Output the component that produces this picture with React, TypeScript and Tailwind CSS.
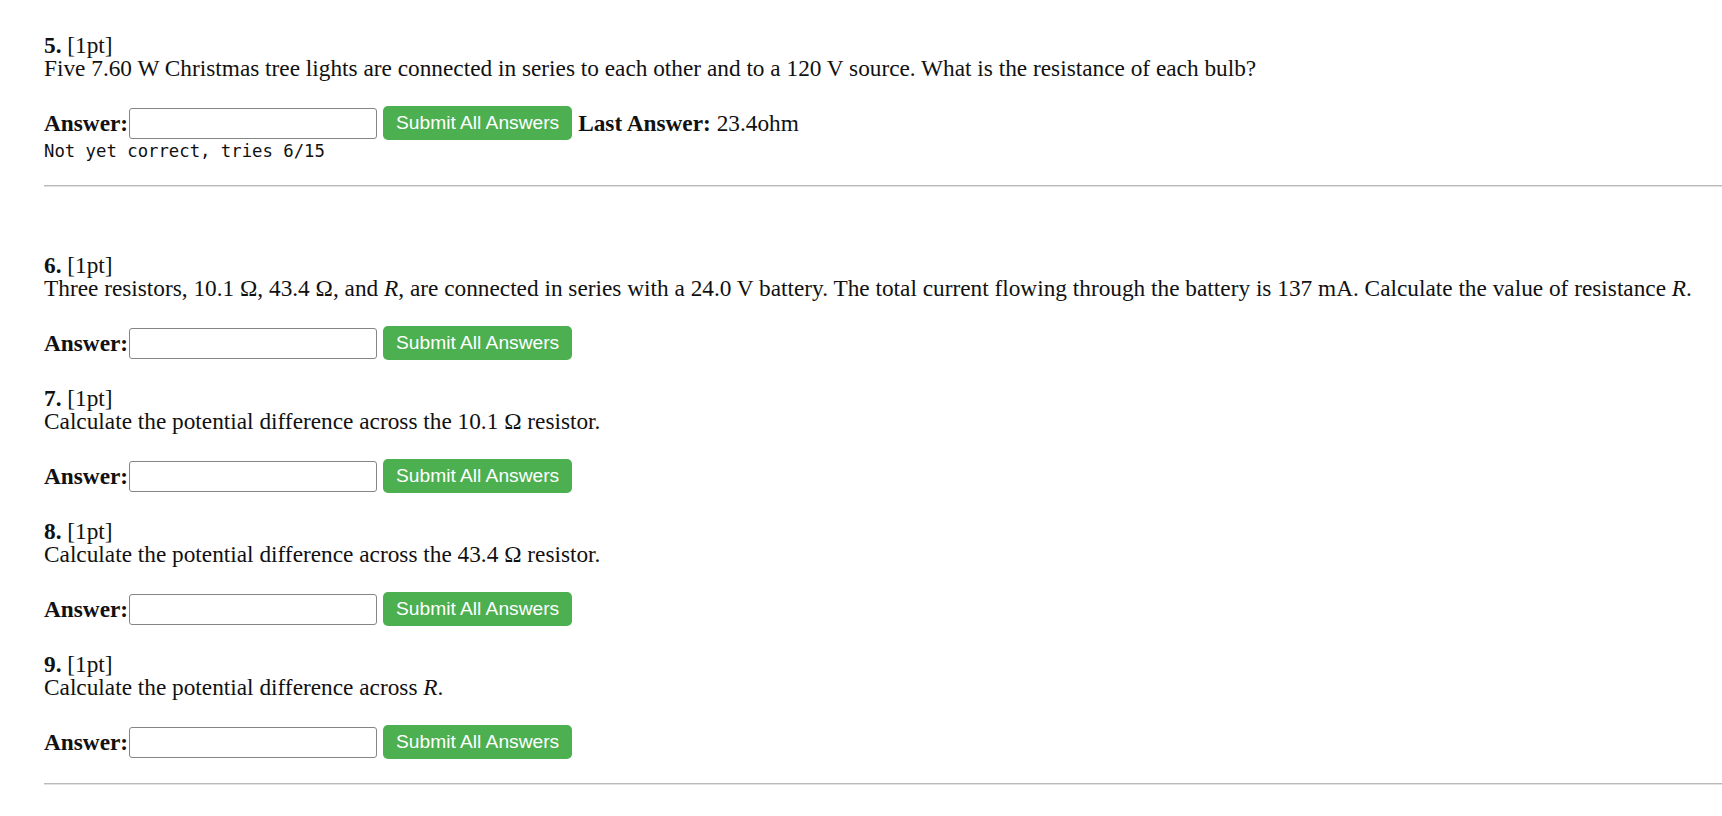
import React from "react";

const AnswerRow = ({ last }: { last?: string }) => (
  <div className="flex items-center h-[34px] mt-[27px] leading-[22.5px]">
    <span className="font-bold">Answer:</span>
    <input
      type="text"
      className="ml-px w-[248px] h-[31px] border border-[#858585] rounded-[3px] bg-white outline-none px-1"
    />
    <button
      type="button"
      className="ml-[6px] w-[189px] h-[34px] rounded-[5px] bg-[#4caf50] text-white text-[19.2px] leading-none font-['Liberation_Sans',Arial,sans-serif]"
    >
      Submit All Answers
    </button>
    {last && (
      <span className="ml-[6px]">
        <b>Last Answer:</b> {last}
      </span>
    )}
  </div>
);

const Hr = ({ className }: { className: string }) => (
  <div className={`border-t border-t-[#b9b9b9] border-b border-b-[#e2e2e2] ${className}`} />
);

const Question = ({
  n,
  children,
  className,
  last,
}: {
  n: number;
  children: React.ReactNode;
  className?: string;
  last?: string;
}) => (
  <div className={className}>
    <div className="leading-[22.5px]">
      <b>{n}.</b> [1pt]
    </div>
    <div className="leading-[22.5px]">{children}</div>
    <AnswerRow last={last} />
  </div>
);

export default function App() {
  return (
    <div className="w-full h-[816px] bg-white pl-[44px] pt-[34px] text-[#111] text-[23.3px] font-['Liberation_Serif','Times_New_Roman',serif] overflow-hidden">
      <Question n={5} last="23.4ohm">
        Five 7.60 W Christmas tree lights are connected in series to each other and to a 120 V source. What is the
        resistance of each bulb?
      </Question>
      <div className="mt-px leading-[20px] text-[17.3px] font-['DejaVu_Sans_Mono','Liberation_Mono',monospace] whitespace-pre">
        Not yet correct, tries 6/15
      </div>
      <Hr className="mt-[24px]" />

      <Question n={6} className="mt-[67px]">
        Three resistors, 10.1 Ω, 43.4 Ω, and <i>R</i>, are connected in series with a 24.0 V battery. The total
        current flowing through the battery is 137 mA. Calculate the value of resistance <i>R</i>.
      </Question>
      <Question n={7} className="mt-[27px]">
        Calculate the potential difference across the 10.1 Ω resistor.
      </Question>
      <Question n={8} className="mt-[27px]">
        Calculate the potential difference across the 43.4 Ω resistor.
      </Question>
      <Question n={9} className="mt-[27px]">
        Calculate the potential difference across <i>R</i>.
      </Question>
      <Hr className="mt-[24px]" />
    </div>
  );
}
